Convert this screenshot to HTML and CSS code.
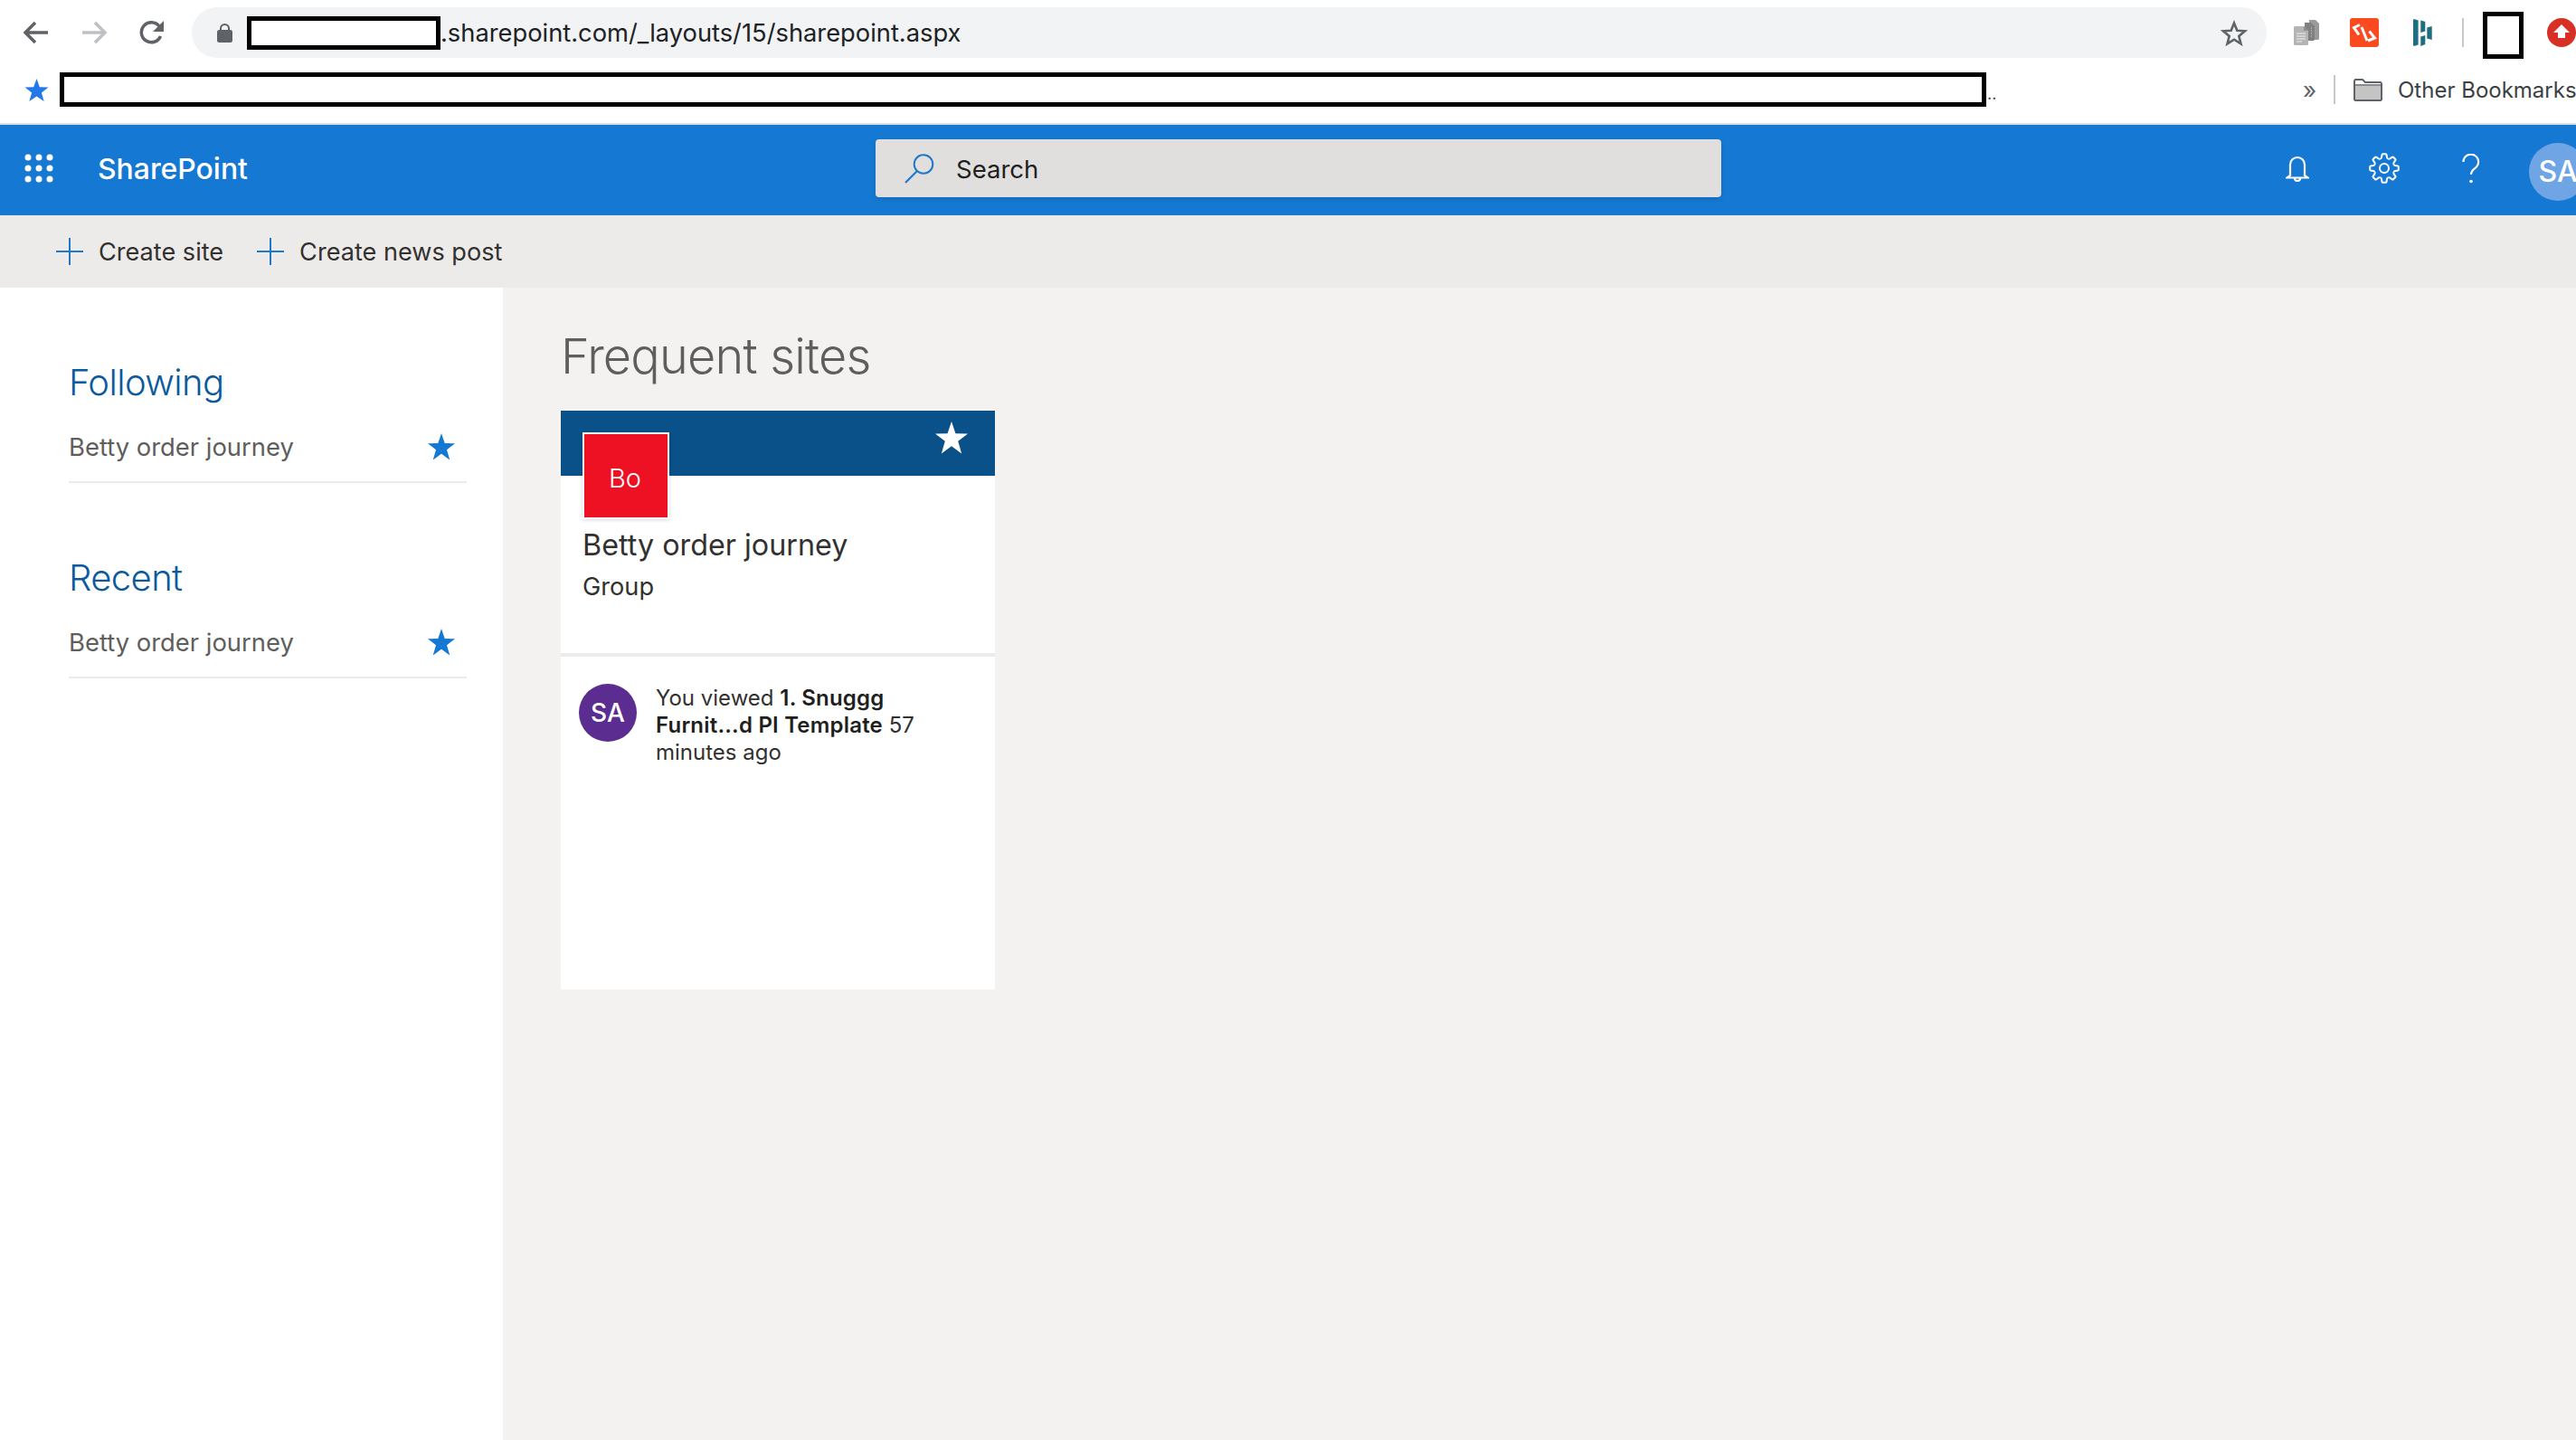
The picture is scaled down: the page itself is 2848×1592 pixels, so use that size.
FILE: index.html
```html
<!DOCTYPE html>
<html lang="en">
<head>
<meta charset="utf-8">
<title>SharePoint</title>
<link rel="stylesheet" href="styles.css">
</head>
<body>
<header class="browser">
  <div class="toolbar">
    <span class="slot"><svg width="28" height="26" viewBox="0 0 28 26"><path d="M27 13H3M13 2 2 13l11 11" class="nav dark"/></svg></span>
    <span class="slot"><svg width="28" height="26" viewBox="0 0 28 26"><path d="M1 13h24M15 2l11 11-11 11" class="nav light"/></svg></span>
    <span class="slot"><svg width="28" height="26" viewBox="0 0 28 26"><path d="M23.500 17A11 11 0 1 1 22 6" class="nav dark"/><path d="M27 0v12H15z" class="fill-dark"/></svg></span>
    <div class="omnibox">
      <svg class="lock" width="17" height="21" viewBox="0 0 17 21"><path d="M4 8V5.500a4.500 4.500 0 0 1 9 0V8" fill="none" stroke="#5f6368" stroke-width="2"/><rect y="7" width="17" height="14" rx="2.500" fill="#5f6368"/></svg>
      <span class="redact redact-host"></span>
      <span class="url">.sharepoint.com/_layouts/15/sharepoint.aspx</span>
      <svg class="omni-star" width="30" height="29" viewBox="0 0 30 29"><path d="M15 3.500l3.300 8.200 8.700.6-6.700 5.600 2.200 8.500-7.500-4.700-7.500 4.700 2.200-8.500L3 12.300l8.700-.6z" fill="none" stroke="#5f6368" stroke-width="2.600"/></svg>
    </div>
    <span class="slot"><svg width="28" height="28" viewBox="0 0 28 28"><path d="M17 0h7l4 4v17l-1 1H17z" fill="#9a9a9a"/><path d="M12 3h7l4 4v15l-1 1H12z" fill="#808080"/><path d="M19 9h1M19 12h1M19 15h1M19 18h1" stroke="#d8d8d8"/><path d="M1 7h10l5 5v15l-1 1H1l-1-1V8z" fill="#b4b4b4"/><path d="M11 7l5 5h-5z" fill="#8e8e8e"/><path d="M3 15h10M3 18h10M3 21h10M3 24h6" stroke="#f2f2f2" stroke-width="1.200"/></svg></span>
    <span class="slot"><svg width="32" height="32" viewBox="0 0 32 32"><rect width="32" height="32" rx="3" fill="#fb4a1f"/><path d="M11 7.500 4.500 10.500 10 18.500M13 10l6 15M21.500 14.500 27.500 22 20 25" fill="none" stroke="#fff" stroke-width="3"/></svg></span>
    <span class="slot"><svg width="21" height="30" viewBox="0 0 21 30"><path d="M1 0l4.600 1.500v27L1 30l-1-1V1zM8.300 1.500l5 1.500v10.500l-5 1.500zM8.300 19.500l5-1.500v10l-5 2zM15.300 9.500l5.400-1.500v15l-5.400-1.500z" fill="#1d6f80"/></svg></span>
    <span class="divider tool-divider"></span>
    <span class="redact redact-ext"></span>
    <span class="update"><svg width="32" height="32" viewBox="0 0 32 32"><circle cx="16" cy="16" r="16" fill="#d93025"/><path d="M16 7l9 9h-5v6h-8v-6H7z" fill="#fff"/></svg></span>
  </div>
  <div class="bookmarks">
    <svg class="book-star" width="27" height="25" viewBox="0 0 27 25"><path d="M13.500 0l3.300 9.200 9.700.3-7.600 6 2.700 9.500-8.100-5.500L5.400 25l2.700-9.500-7.600-6 9.700-.3z" fill="#2477e8"/></svg>
    <span class="redact redact-bookmarks"></span>
    <span class="more-dots">..</span>
    <span class="chevrons">»</span>
    <span class="divider book-divider"></span>
    <svg class="folder" width="32" height="25" viewBox="0 0 32 25"><path d="M1 23V2.500l1-1.500h8l3 3h17l1 1.500V23l-1 1H2z" fill="#fff" stroke="#5f6368" stroke-width="2"/><path d="M2 8h28v15H2z" fill="#c4c4c4"/><path d="M1 7h30" stroke="#5f6368" stroke-width="1.500"/></svg>
    <span class="other">Other Bookmarks</span>
  </div>
</header>
<div class="suite">
  <div class="brand">
    <svg class="waffle" width="32" height="32" viewBox="0 0 32 32" fill="#fff"><circle cx="4" cy="4" r="3.500"/><circle cx="16" cy="4" r="3.500"/><circle cx="28" cy="4" r="3.500"/><circle cx="4" cy="16" r="3.500"/><circle cx="16" cy="16" r="3.500"/><circle cx="28" cy="16" r="3.500"/><circle cx="4" cy="28" r="3.500"/><circle cx="16" cy="28" r="3.500"/><circle cx="28" cy="28" r="3.500"/></svg>
    <span class="brand-name">SharePoint</span>
  </div>
  <div class="search">
    <svg width="33" height="33" viewBox="0 0 33 33"><circle cx="21" cy="11.500" r="10.300" fill="none" stroke="#1f78c8" stroke-width="2"/><path d="M14 19 1 32" stroke="#1f78c8" stroke-width="2.200"/></svg>
    <span class="search-label">Search</span>
  </div>
  <div class="suite-actions">
    <span class="action"><svg width="26" height="30" viewBox="0 0 26 30"><path d="M5 23V11a8 8 0 0 1 16 0v12l3.500 2.500h-23z M10 26a3 3 0 0 0 6 0" fill="none" stroke="#fff" stroke-width="2.200"/></svg></span>
    <span class="action"><svg width="34" height="34" viewBox="-17 -17 34 34"><defs><path id="tooth" d="M-4.400-10.600Q-3.400-10.600-3-12L-2.500-15Q-2.300-15.800-1.600-15.800H1.600Q2.300-15.800 2.500-15L3-12Q3.400-10.600 4.400-10.600" fill="none" stroke="#fff" stroke-width="2"/></defs><use href="#tooth"/><use href="#tooth" transform="rotate(45)"/><use href="#tooth" transform="rotate(90)"/><use href="#tooth" transform="rotate(135)"/><use href="#tooth" transform="rotate(180)"/><use href="#tooth" transform="rotate(225)"/><use href="#tooth" transform="rotate(270)"/><use href="#tooth" transform="rotate(315)"/><circle r="5" fill="none" stroke="#fff" stroke-width="2"/></svg></span>
    <span class="action"><svg width="20" height="33" viewBox="0 0 20 33"><path d="M1.500 9a8.300 8.300 0 1 1 13 6.800c-3 2.200-4.500 3.500-4.500 7.200" fill="none" stroke="#fff" stroke-width="2.200"/><circle cx="10" cy="30.500" r="1.800" fill="#fff"/></svg></span>
    <span class="me">SA</span>
  </div>
</div>
<nav class="commands">
  <a class="command"><svg width="30" height="30" viewBox="0 0 30 30"><path d="M15 0v30M0 15h30" stroke="#1f78c8" stroke-width="2"/></svg>Create site</a>
  <a class="command"><svg width="30" height="30" viewBox="0 0 30 30"><path d="M15 0v30M0 15h30" stroke="#1f78c8" stroke-width="2"/></svg>Create news post</a>
</nav>
<main class="layout">
  <aside class="sidebar">
    <section class="side-section">
      <h2 class="side-title">Following</h2>
      <div class="side-row"><span>Betty order journey</span><svg width="30" height="30" viewBox="0 0 30 30"><path d="M15 0l3.700 11 11.300.3-9 6.900 3.300 11.300-9.300-6.700-9.300 6.700L9 18.200 0 11.300 11.300 11z" fill="#1579d3"/></svg></div>
    </section>
    <section class="side-section">
      <h2 class="side-title">Recent</h2>
      <div class="side-row"><span>Betty order journey</span><svg width="30" height="30" viewBox="0 0 30 30"><path d="M15 0l3.700 11 11.300.3-9 6.900 3.300 11.300-9.300-6.700-9.300 6.700L9 18.200 0 11.300 11.300 11z" fill="#1579d3"/></svg></div>
    </section>
  </aside>
  <section class="content">
    <h1 class="page-title">Frequent sites</h1>
    <article class="card">
      <div class="card-head">
        <svg width="36" height="36" viewBox="0 0 30 30"><path d="M15 0l3.700 11 11.300.3-9 6.900 3.300 11.300-9.300-6.700-9.300 6.700L9 18.200 0 11.300 11.300 11z" fill="#fff"/></svg>
      </div>
      <div class="site-logo">Bo</div>
      <div class="card-body">
        <div class="site-name">Betty order journey</div>
        <div class="site-type">Group</div>
      </div>
      <div class="activity">
        <span class="activity-avatar">SA</span>
        <p class="activity-text">You viewed <b>1. Snuggg Furnit...d PI Template</b> 57 minutes ago</p>
      </div>
    </article>
  </section>
</main>
</body>
</html>
```
FILE: styles.css
```css
* { box-sizing: border-box; }
html, body { margin: 0; height: 100%; }
body {
  width: 2848px;
  height: 1592px;
  overflow: hidden;
  background: #f3f2f1;
  font-family: Inter, "Noto Sans", "Liberation Sans", sans-serif;
  display: flex;
  flex-direction: column;
}
svg { display: block; flex: none; }
.browser { background: #fff; height: 138px; border-bottom: 2px solid #d9dfe3; flex: none; }
.toolbar { height: 72px; padding: 8px 0 0 8px; display: flex; align-items: flex-start; }
.slot { width: 64px; height: 56px; display: flex; align-items: center; justify-content: center; flex: none; }
.nav { fill: none; stroke-width: 3.500; }
.dark { stroke: #5f6368; }
.light { stroke: #bdc1c6; }
.fill-dark { fill: #5f6368; }
.omnibox {
  flex: 1;
  height: 56px;
  margin: 0 12px;
  padding: 0 21px 0 28px;
  border-radius: 28px;
  background: #f1f3f4;
  display: flex;
  align-items: center;
}
.lock { margin-right: 16px; }
.redact { display: block; background: #fff; border: 5px solid #000; flex: none; }
.redact-host { width: 214px; height: 37px; }
.url { flex: 1; font-size: 27.3px; color: #202124; }
.divider { display: block; width: 2px; background: #c8c8c8; flex: none; }
.tool-divider { height: 32px; margin: 12px 21px 0 12px; }
.redact-ext { width: 45px; height: 52px; margin-top: 5px; }
.update { margin: 12px 0 0 26px; }
.bookmarks { height: 64px; padding: 0 0 10px 27px; display: flex; align-items: center; }
.book-star { margin-right: 12px; }
.redact-bookmarks { width: 2130px; height: 38px; }
.more-dots { flex: none; font-size: 18px; color: #3c4043; width: 350px; padding: 8px 0 0 1px; }
.chevrons { flex: none; font-size: 26px; color: #5f6368; width: 34px; }
.book-divider { height: 32px; margin-right: 20px; }
.folder { margin-right: 17px; }
.other { flex: none; font-size: 24px; color: #3c4043; white-space: nowrap; }
.suite { height: 100px; padding-bottom: 4px; background: #1579d3; display: grid; grid-template-columns: 968px 935px 1fr; align-items: center; flex: none; }
.brand { display: flex; align-items: center; gap: 49px; padding-left: 27px; }
.brand-name { font-size: 31.9px; font-weight: 500; color: #fff; }
.search {
  height: 64px;
  background: #e0dfde;
  border-radius: 4px;
  box-shadow: 0 2px 6px rgba(0, 0, 0, .12);
  padding-left: 32px;
  display: flex;
  align-items: center;
  gap: 24px;
  font-size: 27.5px;
  color: #201f1e;
}
.search-label { padding-top: 2px; }
.suite-actions { display: flex; align-items: center; justify-content: flex-end; }
.action { width: 96px; display: flex; justify-content: center; }
.me {
  flex: none;
  width: 64px;
  height: 64px;
  margin: 8px -12px 0 16px;
  padding-bottom: 2px;
  border-radius: 50%;
  background: #6fa5e5;
  color: #fff;
  font-size: 32px;
  font-weight: 500;
  display: flex;
  align-items: center;
  justify-content: center;
}
.commands { height: 80px; background: #edebe9; padding-left: 62px; display: flex; align-items: center; gap: 37px; flex: none; }
.command { display: flex; align-items: center; gap: 17px; font-size: 27.1px; color: #323130; }
.layout { flex: 1; display: flex; }
.sidebar { width: 556px; background: #fff; padding: 77px 40px 0 76px; display: flex; flex-direction: column; gap: 77px; }
.side-title { margin: 0 0 5px; font-size: 40px; line-height: 56px; font-weight: 300; letter-spacing: -0.6px; color: #0b5a9e; }
.side-row { height: 78px; border-bottom: 2px solid #edebe9; padding-right: 13px; display: flex; align-items: center; justify-content: space-between; font-size: 27.4px; color: #605e5c; }
.content { flex: 1; padding: 40px 0 0 64px; }
.page-title { margin: 0 0 24px; font-size: 54px; line-height: 72px; font-weight: 300; letter-spacing: -0.8px; color: #605e5c; }
.card { position: relative; width: 480px; height: 640px; background: #fff; }
.card-head { height: 72px; background: #0b5189; padding: 12px 30px 0 0; display: flex; justify-content: flex-end; }
.site-logo {
  position: absolute;
  left: 24px;
  top: 24px;
  width: 96px;
  height: 96px;
  background: #ee1023;
  border: 2px solid #fff;
  box-shadow: 0 1px 4px rgba(0, 0, 0, .15);
  color: #fff;
  font-size: 29px;
  font-weight: 300;
  display: flex;
  align-items: center;
  justify-content: center;
  padding: 4px 2px 0 0;
}
.card-body { height: 196px; padding: 53px 0 0 24px; }
.site-name { font-size: 32.3px; line-height: 48px; color: #323130; }
.site-type { font-size: 27.2px; line-height: 36px; margin-top: 4px; color: #323130; }
.activity { border-top: 4px solid #edebe9; padding: 30px 20px 0; display: flex; gap: 21px; }
.activity-avatar { flex: none; width: 64px; height: 64px; border-radius: 50%; background: #5c2d91; color: #fff; font-size: 28px; font-weight: 500; display: flex; align-items: center; justify-content: center; }
.activity-text { margin: 0; width: 300px; padding-top: 1px; font-size: 24px; line-height: 30px; color: #323130; }
.activity-text b { font-weight: 600; letter-spacing: 0.2px; color: #201f1e; }
```
